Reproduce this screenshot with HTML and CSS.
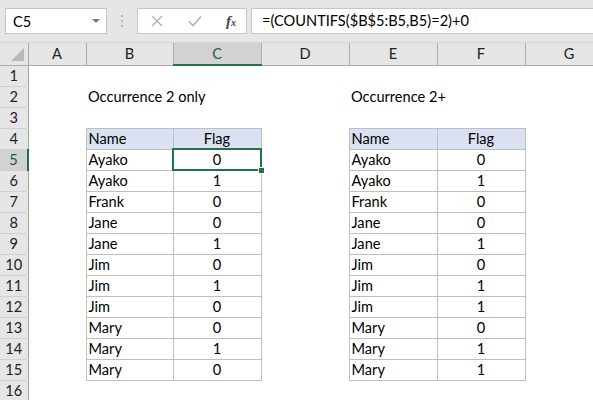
FILE: index.html
```html
<!DOCTYPE html>
<html lang="en">
<head>
    <meta charset="UTF-8">
    <title>COUNTIFS occurrence</title>
    <link rel="stylesheet" href="styles.css">
</head>
<body>
    <div class="toolbar">
        <div class="name-box">
            <span>C5</span>
            <span class="caret"></span>
        </div>
        <div class="grip"><i></i><i></i><i></i></div>
        <div class="fx-buttons">
            <svg width="12" height="12" viewBox="0 0 12 12"><path d="M1 1 L11 11 M11 1 L1 11" stroke="#b3b3b3" stroke-width="1.4" fill="none"/></svg>
            <svg width="14" height="12" viewBox="0 0 14 12"><path d="M1 6.5 L5 10.5 L13 1.5" stroke="#b3b3b3" stroke-width="1.6" fill="none"/></svg>
            <span class="fx">f<sub>x</sub></span>
        </div>
        <div class="formula">=(COUNTIFS($B$5:B5,B5)=2)+0</div>
    </div>

    <table class="sheet">
        <colgroup>
            <col class="c-rowhead">
            <col class="c-a">
            <col class="c-b">
            <col class="c-std"><col class="c-std"><col class="c-std">
            <col class="c-std"><col class="c-std">
        </colgroup>
        <thead>
            <tr>
                <th class="corner"><span class="tri"></span></th>
                <th>A</th><th>B</th><th class="sel">C</th><th>D</th>
                <th>E</th><th>F</th><th>G</th>
            </tr>
        </thead>
        <tbody id="rows"></tbody>
    </table>

    <script>
        // names are shared by both tables, only the flags differ
        const names = ['Ayako', 'Ayako', 'Frank', 'Jane', 'Jane', 'Jim', 'Jim', 'Jim', 'Mary', 'Mary', 'Mary'];
        const only2 = [0, 1, 0, 0, 1, 0, 1, 0, 0, 1, 0];
        const twoPlus = [0, 1, 0, 0, 1, 0, 1, 1, 0, 1, 1];

        const body = document.getElementById('rows');

        function cell(text, cls) {
            const td = document.createElement('td');
            if (cls) td.className = cls;
            td.textContent = text;
            return td;
        }

        for (let r = 1; r <= 16; r++) {
            const tr = document.createElement('tr');
            const head = document.createElement('th');
            head.textContent = r;
            if (r === 5) head.className = 'sel';
            tr.appendChild(head);

            let cells = ['', '', '', '', '', '', ''];
            let kinds = ['', '', '', '', '', '', ''];

            if (r === 2) {
                cells[1] = 'Occurrence 2 only';
                cells[4] = 'Occurrence 2+';
                kinds[1] = 'title';
                kinds[4] = 'title';
            } else if (r === 4) {
                cells = ['', 'Name', 'Flag', '', 'Name', 'Flag', ''];
                kinds = ['', 'box hdr', 'box hdr num', '', 'box hdr', 'box hdr num', ''];
            } else if (r >= 5 && r <= 15) {
                const i = r - 5;
                cells = ['', names[i], only2[i], '', names[i], twoPlus[i], ''];
                kinds = ['', 'box', 'box num', '', 'box', 'box num', ''];
                if (r === 5) kinds[2] += ' active';
            }

            cells.forEach((text, c) => tr.appendChild(cell(text, kinds[c])));
            body.appendChild(tr);
        }
    </script>
</body>
</html>
```

FILE: styles.css
```css
body {
    margin: 0;
    overflow: hidden;
    background: #fff;
    font-family: Lato, "Open Sans", sans-serif;
    font-size: 14.6px;
    color: #000;
}
.toolbar {
    display: flex;
    align-items: center;
    height: 42px;
    padding-left: 5px;
    background: #e6e6e6;
    border-bottom: 1px solid #d6d6d6;
}
.name-box {
    display: flex;
    align-items: center;
    justify-content: space-between;
    box-sizing: border-box;
    width: 102px;
    height: 26px;
    padding: 0 6px 0 7px;
    background: #fff;
    border: 1px solid #c6c6c6;
}
.caret {
    width: 0;
    height: 0;
    border-left: 4px solid transparent;
    border-right: 4px solid transparent;
    border-top: 4px solid #777;
}
.grip {
    display: flex;
    flex-direction: column;
    gap: 3px;
    width: 30px;
    align-items: center;
}
.grip i {
    width: 2px;
    height: 2px;
    background: #b5b5b5;
}
.fx-buttons {
    display: flex;
    align-items: center;
    justify-content: space-between;
    box-sizing: border-box;
    width: 110px;
    height: 26px;
    padding: 0 10px 0 13px;
    background: #fff;
    border: 1px solid #c6c6c6;
}
.fx {
    font-family: "Liberation Serif", serif;
    font-style: italic;
    font-weight: bold;
    font-size: 15px;
    color: #444;
}
.fx sub {
    font-size: 10px;
    vertical-align: 0;
}
.formula {
    flex: 1;
    box-sizing: border-box;
    height: 26px;
    margin-left: 4px;
    padding: 3px 10px;
    background: #fff;
    border: 1px solid #c6c6c6;
    border-right: none;
    white-space: nowrap;
}
.sheet {
    table-layout: fixed;
    border-collapse: collapse;
    width: 612px;
}
.c-rowhead { width: 28px; }
.c-a { width: 58px; }
.c-b { width: 87px; }
.c-std { width: 88px; }
.sheet thead th {
    height: 21px;
    padding: 0;
    background: #e6e6e6;
    border-right: 1px solid #acacac;
    border-bottom: 1px solid #acacac;
    font-weight: normal;
    color: #222;
}
.sheet thead th.sel {
    background: #d2d2d2;
    border-bottom: 2px solid #217346;
    color: #1b5e3a;
}
.corner {
    position: relative;
}
.tri {
    position: absolute;
    right: 4px;
    bottom: 4px;
    width: 0;
    height: 0;
    border-left: 13px solid transparent;
    border-bottom: 13px solid #b9b9b9;
}
.sheet tbody tr {
    height: 21px;
}
.sheet tbody th {
    padding: 0;
    background: #e6e6e6;
    border-right: 1px solid #a3a3a3;
    border-bottom: 1px solid #d0d0d0;
    font-weight: normal;
    color: #222;
}
.sheet tbody th.sel {
    background: #d2d2d2;
    border-right: 2px solid #217346;
    color: #1b5e3a;
}
.sheet td {
    padding: 0 2px;
    white-space: nowrap;
    overflow: visible;
}
.box {
    border: 1px solid #bfbfbf;
}
.hdr {
    background: #d9e1f2;
}
.num {
    text-align: center;
}
.active {
    position: relative;
    outline: 2px solid #217346;
    outline-offset: -1px;
}
.active::after {
    content: "";
    position: absolute;
    right: -4px;
    bottom: -4px;
    width: 5px;
    height: 5px;
    background: #217346;
    border: 1px solid #fff;
}
```
